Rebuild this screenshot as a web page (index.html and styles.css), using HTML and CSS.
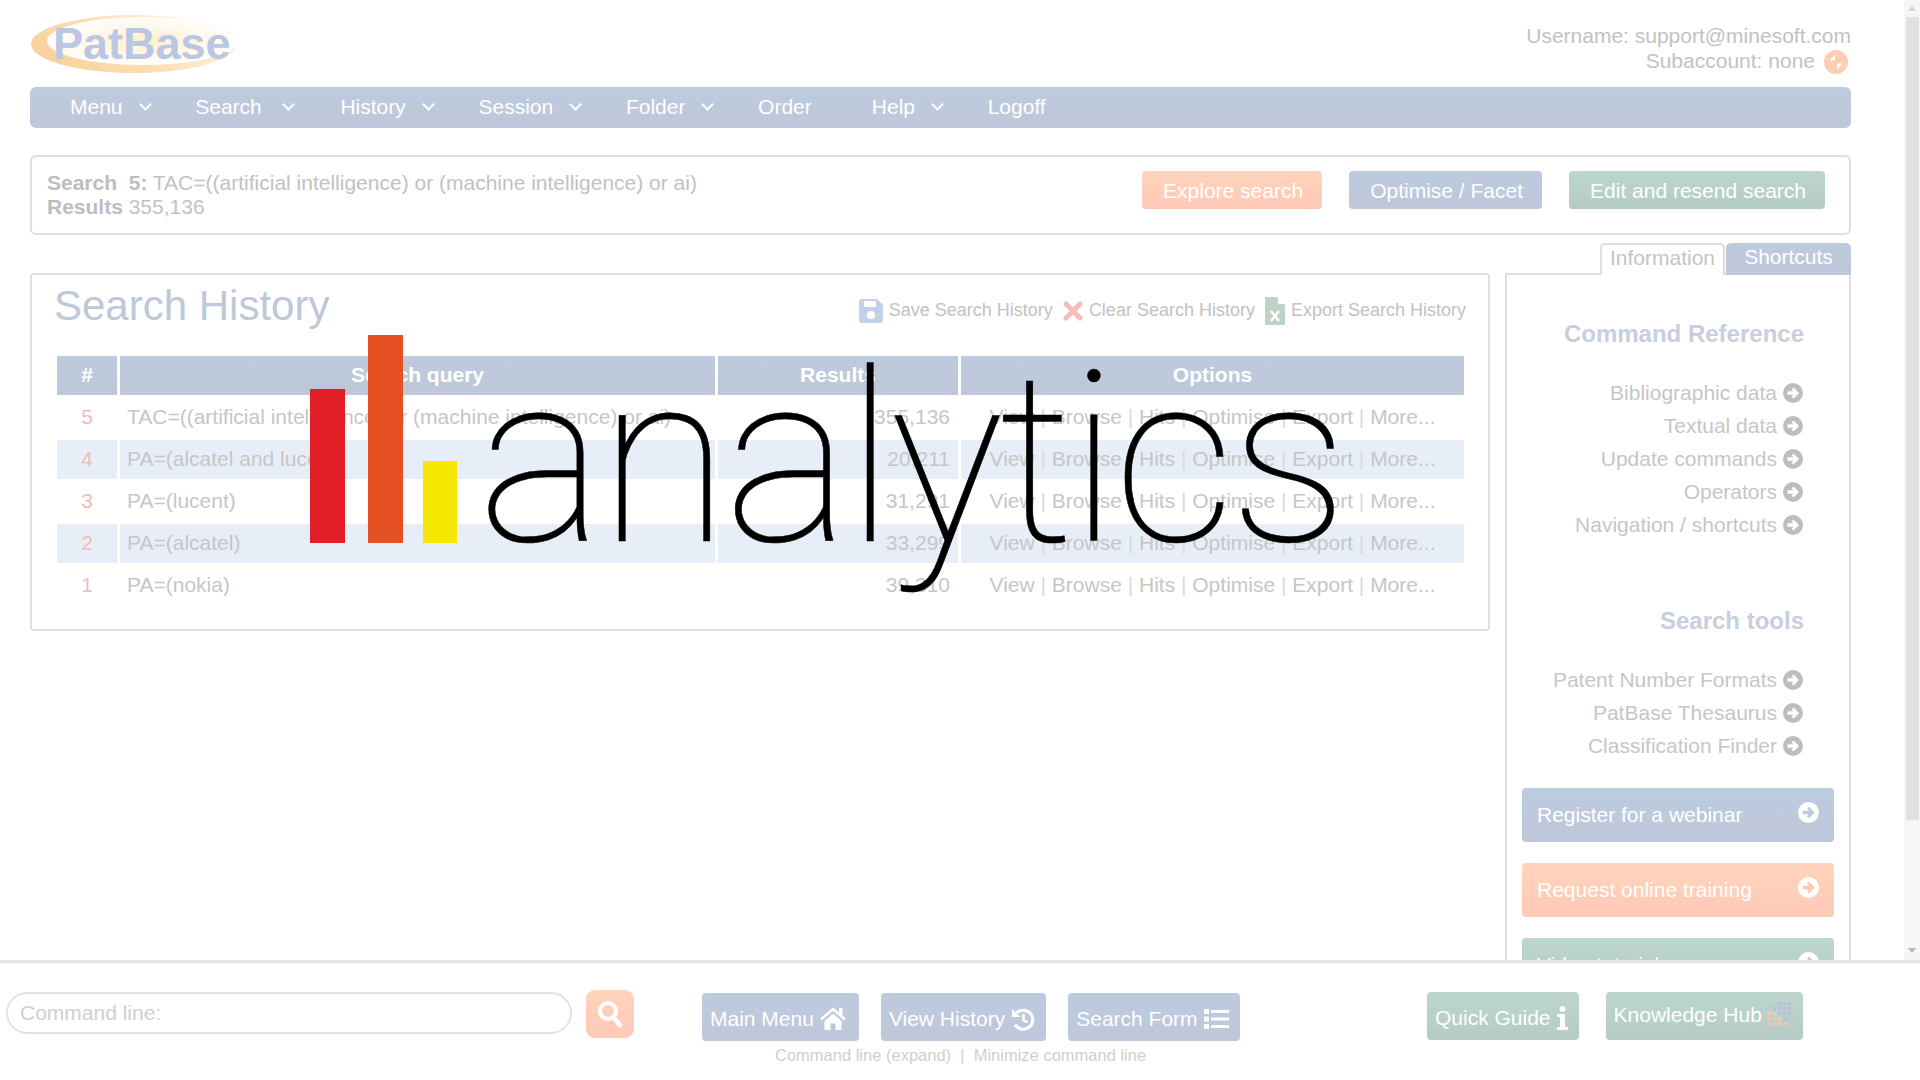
FILE: index.html
```html
<!DOCTYPE html>
<html lang="en">
<head>
    <meta charset="UTF-8">
    <title>PatBase - Search History</title>
    <link rel="stylesheet" href="styles.css">
</head>
<body>
    <svg class="defs" width="0" height="0">
        <symbol id="arrow-circle" viewBox="0 0 20 20">
            <circle cx="10" cy="10" r="10" fill="currentColor"/>
            <path class="arrow-inner" d="M10.5 4.5 L16 10 L10.5 15.5 L8.5 13.5 L10.5 11.7 H4.5 V8.3 H10.5 L8.5 6.5 Z"/>
        </symbol>
    </svg>

    <div class="viewport">
        <div class="page">
            <header class="top">
                <svg class="logo" width="208" height="60" viewBox="0 0 208 60">
                    <defs>
                        <linearGradient id="logoGlow" x1="0" x2="1" y1="0.7" y2="0.3">
                            <stop offset="0" stop-color="#f9cf98"/>
                            <stop offset="0.55" stop-color="#fce3bf"/>
                            <stop offset="1" stop-color="#fff6e8"/>
                        </linearGradient>
                        <radialGradient id="logoCore" cx="0.5" cy="0.5" r="0.55">
                            <stop offset="0" stop-color="#fdf0c8"/>
                            <stop offset="0.55" stop-color="#fff8ec"/>
                            <stop offset="1" stop-color="#ffffff"/>
                        </radialGradient>
                    </defs>
                    <ellipse cx="104" cy="30" rx="103" ry="29" fill="url(#logoGlow)"/>
                    <ellipse cx="113" cy="27" rx="96" ry="24" fill="url(#logoCore)"/>
                    <text x="23" y="45" class="logo-text">PatBase</text>
                </svg>
                <div class="account">
                    <div>Username: support@minesoft.com</div>
                    <div class="subaccount">Subaccount: none
                        <svg class="swap-icon" width="24" height="24" viewBox="0 0 24 24">
                            <circle cx="12" cy="12" r="12" fill="#ffcdb3"/>
                            <path d="M5.5 10.5 L11 4.5 V10.5 Z M18.5 13.5 L13 19.5 V13.5 Z" fill="#fff"/>
                        </svg>
                    </div>
                </div>
            </header>

            <nav class="nav">
                <a class="nav-item">Menu<span class="chev"></span></a>
                <a class="nav-item wide">Search<span class="chev"></span></a>
                <a class="nav-item">History<span class="chev"></span></a>
                <a class="nav-item">Session<span class="chev"></span></a>
                <a class="nav-item">Folder<span class="chev"></span></a>
                <a class="nav-item plain">Order</a>
                <a class="nav-item">Help<span class="chev"></span></a>
                <a class="nav-item plain">Logoff</a>
            </nav>

            <section class="search-box">
                <div class="search-summary">
                    <div><b>Search &nbsp;5:</b> TAC=((artificial intelligence) or (machine intelligence) or ai)</div>
                    <div><b>Results</b> 355,136</div>
                </div>
                <div class="search-actions">
                    <a class="btn btn-orange">Explore search</a>
                    <a class="btn btn-blue">Optimise / Facet</a>
                    <a class="btn btn-green">Edit and resend search</a>
                </div>
            </section>

            <div class="columns">
                <section class="history">
                    <div class="history-head">
                        <h1>Search History</h1>
                        <div class="history-actions">
                            <a class="history-action">
                                <svg width="24" height="24" viewBox="0 0 24 24">
                                    <path d="M3 0 H18 L24 6 V21 A3 3 0 0 1 21 24 H3 A3 3 0 0 1 0 21 V3 A3 3 0 0 1 3 0 Z" fill="#c4d0ea"/>
                                    <rect x="5" y="2" width="12" height="6" fill="#fff"/>
                                    <circle cx="12" cy="16" r="4" fill="#fff"/>
                                </svg>
                                Save Search History
                            </a>
                            <a class="history-action">
                                <svg width="20" height="20" viewBox="0 0 20 20">
                                    <path d="M3 3 L17 17 M17 3 L3 17" stroke="#f6bcbc" stroke-width="5" stroke-linecap="round"/>
                                </svg>
                                Clear Search History
                            </a>
                            <a class="history-action">
                                <svg width="20" height="28" viewBox="0 0 20 28">
                                    <path d="M0 0 H12 L20 8 V28 H0 Z" fill="#bdd3c8"/>
                                    <path d="M13 0 L20 7 H13 Z" fill="#fff"/>
                                    <path d="M6 14 L14 24 M14 14 L6 24" stroke="#fff" stroke-width="2.5"/>
                                </svg>
                                Export Search History
                            </a>
                        </div>
                    </div>
                    <table class="history-table">
                        <colgroup>
                            <col class="col-num"><col class="col-query"><col class="col-results"><col>
                        </colgroup>
                        <thead>
                            <tr><th>#</th><th>Search query</th><th>Results</th><th>Options</th></tr>
                        </thead>
                        <tbody>
                            <tr>
                                <td class="num">5</td>
                                <td>TAC=((artificial intelligence) or (machine intelligence) or ai)</td>
                                <td class="count">355,136</td>
                                <td class="opts">View <i>|</i> Browse <i>|</i> Hits <i>|</i> Optimise <i>|</i> Export <i>|</i> More...</td>
                            </tr>
                            <tr>
                                <td class="num">4</td>
                                <td>PA=(alcatel and lucent)</td>
                                <td class="count">20,211</td>
                                <td class="opts">View <i>|</i> Browse <i>|</i> Hits <i>|</i> Optimise <i>|</i> Export <i>|</i> More...</td>
                            </tr>
                            <tr>
                                <td class="num">3</td>
                                <td>PA=(lucent)</td>
                                <td class="count">31,291</td>
                                <td class="opts">View <i>|</i> Browse <i>|</i> Hits <i>|</i> Optimise <i>|</i> Export <i>|</i> More...</td>
                            </tr>
                            <tr>
                                <td class="num">2</td>
                                <td>PA=(alcatel)</td>
                                <td class="count">33,299</td>
                                <td class="opts">View <i>|</i> Browse <i>|</i> Hits <i>|</i> Optimise <i>|</i> Export <i>|</i> More...</td>
                            </tr>
                            <tr>
                                <td class="num">1</td>
                                <td>PA=(nokia)</td>
                                <td class="count">39,310</td>
                                <td class="opts">View <i>|</i> Browse <i>|</i> Hits <i>|</i> Optimise <i>|</i> Export <i>|</i> More...</td>
                            </tr>
                        </tbody>
                    </table>
                </section>

                <aside class="sidebar">
                    <div class="tabs">
                        <a class="tab tab-active">Information</a>
                        <a class="tab">Shortcuts</a>
                    </div>
                    <div class="side-panel">
                        <h2>Command Reference</h2>
                        <ul class="side-links">
                            <li>Bibliographic data <svg><use href="#arrow-circle"/></svg></li>
                            <li>Textual data <svg><use href="#arrow-circle"/></svg></li>
                            <li>Update commands <svg><use href="#arrow-circle"/></svg></li>
                            <li>Operators <svg><use href="#arrow-circle"/></svg></li>
                            <li>Navigation / shortcuts <svg><use href="#arrow-circle"/></svg></li>
                        </ul>
                        <h2 class="second">Search tools</h2>
                        <ul class="side-links">
                            <li>Patent Number Formats <svg><use href="#arrow-circle"/></svg></li>
                            <li>PatBase Thesaurus <svg><use href="#arrow-circle"/></svg></li>
                            <li>Classification Finder <svg><use href="#arrow-circle"/></svg></li>
                        </ul>
                        <a class="promo btn-blue">Register for a webinar <svg><use href="#arrow-circle"/></svg></a>
                        <a class="promo btn-orange">Request online training <svg><use href="#arrow-circle"/></svg></a>
                        <a class="promo btn-green">Video tutorials <svg><use href="#arrow-circle"/></svg></a>
                    </div>
                </aside>
            </div>
        </div>

        <div class="scrollbar">
            <span class="scroll-up"></span>
            <span class="scroll-thumb"></span>
            <span class="scroll-down"></span>
        </div>

        <!-- watermark sits over the table -->
        <div class="watermark">
            <span class="bar bar-red"></span>
            <span class="bar bar-orange"></span>
            <span class="bar bar-yellow"></span>
            <span class="watermark-text">analytics</span>
        </div>
    </div>

    <footer class="footer">
        <div class="command">
            <input class="command-input" type="text" placeholder="Command line:">
            <a class="command-go btn-orange">
                <svg width="26" height="28" viewBox="0 0 26 28">
                    <circle cx="11" cy="11" r="8" fill="none" stroke="#fff" stroke-width="4"/>
                    <path d="M16 17 L23 25" stroke="#fff" stroke-width="4.5" stroke-linecap="round"/>
                </svg>
            </a>
        </div>
        <div class="footer-middle">
            <div class="footer-buttons">
                <a class="foot-btn btn-blue main-menu">Main Menu
                    <svg width="26" height="24" viewBox="0 0 26 24">
                        <path d="M1 12.5 L13 2 L25 12.5" fill="none" stroke="#fff" stroke-width="2.6"/>
                        <rect x="19" y="1" width="3.5" height="7" fill="#fff"/>
                        <path d="M4.5 14 L13 6.5 L21.5 14 V23 H15.5 V16.5 H10.5 V23 H4.5 Z" fill="#fff"/>
                    </svg>
                </a>
                <a class="foot-btn btn-blue">View History
                    <svg width="24" height="24" viewBox="0 0 24 24">
                        <path d="M5.5 6 A9.5 9.5 0 1 1 4 17.5" fill="none" stroke="#fff" stroke-width="3"/>
                        <path d="M1 2 L9.5 10 H1 Z" fill="#fff"/>
                        <path d="M12.5 7 V13 L16.5 15.5" fill="none" stroke="#fff" stroke-width="2.6"/>
                    </svg>
                </a>
                <a class="foot-btn btn-blue">Search Form
                    <svg width="25" height="22" viewBox="0 0 25 22">
                        <path d="M0 1 H5 V6 H0 Z M0 8.5 H5 V13.5 H0 Z M0 16 H5 V21 H0 Z M7 2 H25 V5 H7 Z M7 9.5 H25 V12.5 H7 Z M7 17 H25 V20 H7 Z" fill="#fff"/>
                    </svg>
                </a>
            </div>
            <div class="footer-links">Command line (expand) &nbsp;|&nbsp; Minimize command line</div>
        </div>
        <div class="footer-right">
            <a class="foot-btn btn-green quick">Quick Guide
                <svg width="11" height="24" viewBox="0 0 11 24">
                    <circle cx="5.5" cy="3" r="3" fill="#fff"/>
                    <path d="M0 8 H8 V21 H11 V24 H0 V21 H3 V11 H0 Z" fill="#fff"/>
                </svg>
            </a>
            <a class="foot-btn btn-green hub">Knowledge Hub
                <svg class="hub-icon" width="24" height="25" viewBox="0 0 24 25">
                    <g fill="#b7c0d6">
                        <rect x="10" y="0" width="3.5" height="3.5"/><rect x="15" y="0" width="3.5" height="3.5"/><rect x="20" y="0" width="3.5" height="3.5"/>
                        <rect x="5" y="5" width="3.5" height="3.5"/><rect x="10" y="5" width="3.5" height="3.5"/><rect x="15" y="5" width="3.5" height="3.5"/><rect x="20" y="5" width="3.5" height="3.5"/>
                        <rect x="10" y="10" width="3.5" height="3.5"/><rect x="15" y="10" width="3.5" height="3.5"/><rect x="20" y="10" width="3.5" height="3.5"/>
                        <rect x="15" y="15" width="3.5" height="3.5"/>
                    </g>
                    <g fill="#f3c7ae">
                        <rect x="0" y="10" width="3.5" height="3.5"/><rect x="5" y="10" width="3.5" height="3.5"/>
                        <rect x="0" y="15" width="3.5" height="3.5"/><rect x="5" y="15" width="3.5" height="3.5"/><rect x="10" y="15" width="3.5" height="3.5"/>
                        <rect x="0" y="20" width="3.5" height="3.5"/><rect x="5" y="20" width="3.5" height="3.5"/><rect x="10" y="20" width="3.5" height="3.5"/><rect x="15" y="20" width="3.5" height="3.5"/>
                    </g>
                </svg>
            </a>
        </div>
    </footer>
</body>
</html>
```

FILE: styles.css
```css
* {
    box-sizing: border-box;
}
html, body {
    margin: 0;
    height: 1080px;
    overflow: hidden;
}
body {
    font-family: "Liberation Sans", Arial, sans-serif;
    font-size: 21px;
    color: #c2c2c2;
    background-color: #fff;
}
.defs {
    position: absolute;
}
.arrow-inner {
    fill: var(--arrow, #fff);
}

.viewport {
    position: relative;
    display: flex;
    height: 960px;
    overflow: hidden;
}
.page {
    width: 1904px;
    padding: 0 53px 0 30px;
}

/* header */
.top {
    display: flex;
    justify-content: space-between;
    height: 87px;
}
.logo {
    margin-top: 14px;
}
.logo-text {
    font-family: "Liberation Sans", Arial, sans-serif;
    font-size: 45px;
    font-weight: bold;
    fill: #bac7e2;
}
.account {
    padding-top: 23px;
    text-align: right;
    line-height: 25px;
}
.subaccount {
    display: flex;
    justify-content: flex-end;
    align-items: center;
    gap: 9px;
    height: 25px;
    padding-right: 3px;
}
.swap-icon {
    margin-top: 2px;
}

/* nav */
.nav {
    display: flex;
    align-items: center;
    height: 41px;
    padding: 0 0 2px 19px;
    border-radius: 6px;
    background: linear-gradient(#bccbde, #bfc7d9);
}
.nav-item {
    display: flex;
    align-items: center;
    padding: 0 23.7px 0 21px;
    font-size: 21px;
    color: #fff;
}
.nav-item.wide {
    padding-right: 25.7px;
}
.nav-item.plain {
    padding-right: 39px;
}
.chev {
    width: 9px;
    height: 9px;
    margin: -4px 1px 0 18px;
    border-right: 2px solid #fff;
    border-bottom: 2px solid #fff;
    transform: rotate(45deg);
}
.wide .chev {
    margin-left: 22px;
}

/* search summary */
.search-box {
    display: flex;
    justify-content: space-between;
    height: 80px;
    margin-top: 27px;
    padding: 14px 24px 0 15px;
    border: 2px solid #dedede;
    border-radius: 6px;
    line-height: 24px;
}
.search-summary b {
    color: #bdbdbd;
}
.search-actions {
    display: flex;
    gap: 27px;
}
.btn {
    display: block;
    height: 38px;
    padding: 0 19px 0 21px;
    border-radius: 4px;
    font-size: 21px;
    line-height: 39px;
    color: #fff;
}
.btn-orange {
    --arrow: #fdc9ae;
    background: linear-gradient(#ffd4bb, #ffc9b8);
}
.btn-blue {
    --arrow: #bcc8dc;
    background: linear-gradient(#bccbdf, #bfc7d9);
}
.btn-green {
    --arrow: #b9d2c9;
    background: linear-gradient(#bdd7cd, #b5cbc4);
}

.columns {
    display: flex;
    gap: 15px;
    align-items: flex-start;
}

/* history */
.history {
    width: 1460px;
    margin-top: 38px;
    padding: 7px 21px 21px 22px;
    border: 2px solid #dedede;
    border-radius: 4px;
}
.history-head {
    display: flex;
    justify-content: space-between;
    align-items: center;
    height: 48px;
    margin-bottom: 23px;
}
h1 {
    margin: 0;
    font-size: 42px;
    font-weight: normal;
    color: #bec8d9;
}
.history-actions {
    display: flex;
    gap: 10px;
    margin: 9px 1px 0 0;
    font-size: 18px;
}
.history-action {
    display: flex;
    align-items: center;
    gap: 6px;
    white-space: nowrap;
}
.history-table {
    width: 100%;
    table-layout: fixed;
    border-spacing: 3px;
    border-collapse: separate;
}
.col-num {
    width: 60px;
}
.col-query {
    width: 595px;
}
.col-results {
    width: 240px;
}
.history-table th {
    height: 39px;
    padding: 0 0 2px;
    font-size: 21px;
    color: #fff;
    background: linear-gradient(#bccbde, #bfc7d9);
}
.history-table td {
    height: 39px;
    padding: 0 7px 2px;
    white-space: nowrap;
    color: #c6c6c6;
}
.history-table tbody tr:nth-child(even) td {
    background-color: #e8eef7;
}
.history-table .num {
    padding: 0 0 2px;
    text-align: center;
    color: #f5b9bb;
}
.history-table .count {
    padding-right: 8px;
    text-align: right;
}
.history-table .opts {
    padding: 0 0 2px;
    text-align: center;
}
.opts i {
    font-style: normal;
    color: #dadada;
}

/* sidebar */
.sidebar {
    width: 346px;
    margin-top: 8px;
}
.tabs {
    display: flex;
    justify-content: flex-end;
    gap: 1px;
    position: relative;
    margin-bottom: -2px;
}
.tab {
    width: 125px;
    height: 32px;
    border-radius: 5px 5px 0 0;
    font-size: 21px;
    line-height: 28px;
    text-align: center;
    color: #fff;
    background: linear-gradient(#bccbde, #bfc7d9);
}
.tab-active {
    color: #c4c4c4;
    background: #fff;
    border: 2px solid #dedede;
    border-bottom: 0;
    line-height: 26px;
}
.side-panel {
    height: 700px;
    padding: 46px 15px 0;
    border: 2px solid #dedede;
}
.side-panel h2 {
    margin: 0 30px 29px 0;
    font-size: 24px;
    line-height: 26px;
    text-align: right;
    color: #c7cfdd;
}
.side-panel h2.second {
    margin-top: 67px;
    margin-bottom: 29px;
}
.side-links {
    margin: 0 31px 0 0;
    padding: 0;
    list-style: none;
}
.side-links li {
    display: flex;
    justify-content: flex-end;
    align-items: center;
    gap: 6px;
    height: 33px;
    color: #c6c6c6;
}
.side-links svg {
    width: 20px;
    height: 20px;
    color: #bdbdbd;
}
.promo {
    display: flex;
    justify-content: space-between;
    align-items: center;
    height: 54px;
    margin-top: 21px;
    padding: 0 15px;
    border-radius: 4px;
    font-size: 21px;
    color: #fff;
}
.side-links + .promo {
    margin-top: 26px;
}
.promo svg {
    width: 21px;
    height: 21px;
    margin-top: -5px;
    color: #fff;
}

/* fake browser scrollbar */
.scrollbar {
    display: flex;
    flex-direction: column;
    align-items: center;
    width: 16px;
    background-color: #f6f6f6;
}
.scroll-up, .scroll-down {
    flex: none;
    width: 0;
    height: 0;
    border-left: 4px solid transparent;
    border-right: 4px solid transparent;
}
.scroll-up {
    margin: 6px 0 6px;
    border-bottom: 5px solid #d4d4d4;
}
.scroll-down {
    margin: 128px 0 0;
    border-top: 5px solid #b4b4b4;
}
.scroll-thumb {
    flex: none;
    width: 13px;
    height: 803px;
    background-color: #e0e0e0;
}

/* analytics mark */
.watermark {
    position: absolute;
    left: 310px;
    top: 335px;
    display: flex;
    align-items: flex-end;
    height: 208px;
}
.bar {
    width: 35px;
}
.bar-red {
    height: 154px;
    margin-right: 23px;
    background-color: #e21f26;
}
.bar-orange {
    height: 208px;
    margin-right: 20px;
    background-color: #e55022;
}
.bar-yellow {
    width: 34px;
    height: 82px;
    background-color: #f5e600;
}
.watermark-text {
    position: absolute;
    left: 168px;
    bottom: -62px;
    font-family: Roboto, sans-serif;
    font-size: 238px;
    font-weight: 100;
    line-height: 290px;
    letter-spacing: -4.7px;
    color: #000;
    white-space: nowrap;
    -webkit-text-stroke: 0.5px #000;
}

/* footer */
.footer {
    position: relative;
    display: flex;
    height: 120px;
    border-top: 3px solid #e6e6e6;
}
.command {
    display: flex;
    align-items: flex-start;
    width: 702px;
    padding: 27px 0 0 6px;
}
.command-input {
    width: 566px;
    height: 42px;
    margin-top: 2px;
    padding: 0 12px;
    border: 2px solid #e2e2e2;
    border-radius: 21px;
    outline: none;
    font-family: inherit;
    font-size: 21px;
}
.command-input::placeholder {
    color: #cfcfcf;
}
.command-go {
    display: flex;
    justify-content: center;
    align-items: center;
    width: 48px;
    height: 48px;
    margin-left: 14px;
    border-radius: 9px;
}
.footer-middle {
    width: 538px;
    padding-top: 30px;
}
.footer-buttons {
    display: flex;
    gap: 22px;
}
.foot-btn {
    display: flex;
    align-items: center;
    gap: 6px;
    height: 48px;
    padding: 3px 11px 0 8px;
    border-radius: 4px;
    font-size: 21px;
    color: #fff;
    white-space: nowrap;
}
.main-menu {
    padding-right: 13px;
}
.footer-links {
    margin-top: 3px;
    padding-left: 73px;
    font-size: 16.5px;
    line-height: 22px;
    color: #cfcfcf;
}
.footer-right {
    display: flex;
    gap: 27px;
    margin-left: 187px;
    padding-top: 29px;
}
.hub {
    align-items: flex-start;
    padding-top: 11px;
}
.hub-icon {
    margin-top: -1px;
}
```
